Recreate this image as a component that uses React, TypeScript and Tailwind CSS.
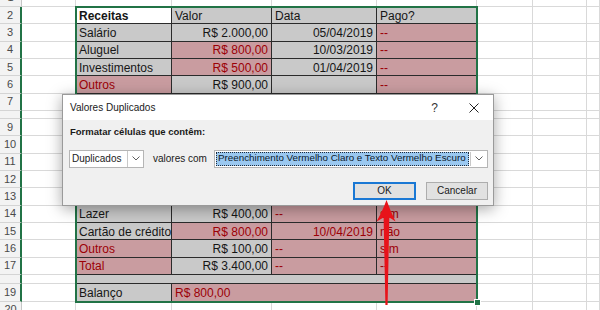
import React from "react";

type Fill = "w" | "g" | "p";
type Cell = { t: string; f: Fill; red?: boolean; right?: boolean; bold?: boolean };

const g = (t = "", right = false): Cell => ({ t, f: "g", right });
const p = (t = "", right = false): Cell => ({ t, f: "p", red: true, right });
const head = (t: string): Cell => ({ t, f: "w", bold: true });

const FILL: Record<Fill, string> = {
  w: "bg-white",
  g: "bg-[#c9c9c9]",
  p: "bg-[#c99ca0]",
};

// B..E widths
const W = ["w-[96px]", "w-[100px]", "w-[105px]", "w-[100px]"];

type Row = { n: number; h: string; kind?: "strip" | "balance"; cells?: Cell[] };

// rows 7-13 sit behind the dialog, so they are left blank
const hidden = (): Cell[] => [g(), g(), g(), p()];

const rows: Row[] = [
  { n: 1, h: "h-[17.35px]" },
  { n: 2, h: "h-[17.35px]", cells: [head("Receitas"), g("Valor"), g("Data"), g("Pago?")] },
  { n: 3, h: "h-[17.35px]", cells: [g("Salário"), g("R$ 2.000,00", true), g("05/04/2019", true), p("--")] },
  { n: 4, h: "h-[17.35px]", cells: [g("Aluguel"), p("R$ 800,00", true), g("10/03/2019", true), p("--")] },
  { n: 5, h: "h-[17.35px]", cells: [g("Investimentos"), p("R$ 500,00", true), g("01/04/2019", true), p("--")] },
  { n: 6, h: "h-[17.35px]", cells: [p("Outros"), g("R$ 900,00", true), g(""), p("--")] },
  { n: 7, h: "h-[17.35px]", cells: hidden() },
  { n: 8, h: "h-[8px]", cells: hidden() },
  { n: 9, h: "h-[17.35px]", cells: hidden() },
  { n: 10, h: "h-[17.35px]", cells: hidden() },
  { n: 11, h: "h-[17.35px]", cells: hidden() },
  { n: 12, h: "h-[17.35px]", cells: hidden() },
  { n: 13, h: "h-[17.35px]", cells: hidden() },
  { n: 14, h: "h-[17.35px]", cells: [g("Lazer"), g("R$ 400,00", true), p("--"), p("sim")] },
  { n: 15, h: "h-[17.35px]", cells: [g("Cartão de crédito"), p("R$ 800,00", true), p("10/04/2019", true), p("não")] },
  { n: 16, h: "h-[17.35px]", cells: [p("Outros"), g("R$ 100,00", true), p("--"), p("sim")] },
  { n: 17, h: "h-[17.35px]", cells: [p("Total"), g("R$ 3.400,00", true), p("--"), p("--")] },
  { n: 18, h: "h-[9px]", kind: "strip" },
  { n: 19, h: "h-[17.35px]", kind: "balance" },
  { n: 20, h: "h-[17.35px]" },
];

const grid = "shrink-0 border-r border-b border-[#d9d9d9] bg-white";
const dark = "shrink-0 border-r border-b border-[#2b2b2b] flex items-center overflow-hidden whitespace-nowrap px-[3px] pt-[1px]";

function DataCell({ c, w }: { c: Cell; w: string }) {
  return (
    <div
      className={`${dark} ${w} ${FILL[c.f]} ${c.right ? "justify-end" : ""} ${
        c.red ? "text-[#9c0006]" : "text-[#161616]"
      } ${c.bold ? "font-bold" : ""}`}
    >
      {c.t}
    </div>
  );
}

function SheetRow({ r }: { r: Row }) {
  const selected = r.n >= 2 && r.n <= 19;
  return (
    <div className={`flex ${r.h}`}>
      <div
        className={`w-[22px] shrink-0 flex items-center justify-center bg-[#f3f3f3] text-[#4a4a4a] text-[11px] border-b border-[#d4d4d4] ${
          selected ? "border-r-2 border-r-[#217346]" : "border-r border-r-[#c6c6c6]"
        }`}
      >
        {r.h === "h-[17.35px]" ? r.n : ""}
      </div>
      <div className={`${grid} w-[54px]`} />
      {r.cells && r.cells.map((c, i) => <DataCell key={i} c={c} w={W[i]} />)}
      {r.kind === "strip" && <div className="shrink-0 w-[401px] bg-[#c9c9c9] border-b border-[#2b2b2b]" />}
      {r.kind === "balance" && (
        <>
          <DataCell c={g("Balanço")} w={W[0]} />
          <DataCell c={p("R$ 800,00")} w="w-[305px]" />
        </>
      )}
      {!r.cells && !r.kind && W.map((w, i) => <div key={i} className={`${grid} ${w}`} />)}
      <div className={`${grid} w-[56px]`} />
      <div className={`${grid} w-[54px]`} />
      <div className={`${grid} flex-1`} />
    </div>
  );
}

function Chevron() {
  return (
    <svg width="8" height="5" viewBox="0 0 8 5">
      <path d="M0.5 0.5 L4 4 L7.5 0.5" stroke="#606060" fill="none" strokeWidth="1" />
    </svg>
  );
}

function Dialog() {
  return (
    <div className="absolute left-[62px] top-[94px] w-[432px] h-[112px] flex flex-col bg-[#f0f0f0] border border-[#9a9a9a] shadow-[0_3px_14px_rgba(0,0,0,0.35)] text-[10px] text-[#1a1a1a]">
      <div className="h-[25px] shrink-0 bg-white flex items-center pl-[7px] pr-[14px]">
        <span>Valores Duplicados</span>
        <span className="ml-auto text-[12px] text-[#333]">?</span>
        <span className="ml-[31px] flex items-center">
          <svg width="10" height="10" viewBox="0 0 10 10">
            <path d="M0.5 0.5 L9.5 9.5 M9.5 0.5 L0.5 9.5" stroke="#222" strokeWidth="1" fill="none" />
          </svg>
        </span>
      </div>
      <div className="pl-[6px] pr-[5px] pt-[6px]">
        <div className="font-bold text-[9.5px] leading-[11px] pl-[1px]">Formatar células que contêm:</div>
        <div className="mt-[12.5px] flex items-center h-[18px]">
          <div className="w-[75px] h-[18px] flex bg-white border border-[#b5b5b5]">
            <span className="flex-1 flex items-center pl-[2px]">Duplicados</span>
            <span className="w-[16px] flex items-center justify-center border-l border-[#c8c8c8]">
              <Chevron />
            </span>
          </div>
          <span className="ml-[9px]">valores com</span>
          <div className="ml-auto w-[274px] h-[18px] flex bg-white border border-[#b5b5b5] p-[1px]">
            <span className="flex-1 min-w-0 flex items-center px-[1px] whitespace-nowrap overflow-hidden text-[9.8px] bg-[#9ac8f0] border border-dotted border-[#1e2a3a] text-[#0c1a2c]">
              Preenchimento Vermelho Claro e Texto Vermelho Escuro
            </span>
            <span className="w-[16px] shrink-0 ml-[1px] flex items-center justify-center border-l border-[#c8c8c8]">
              <Chevron />
            </span>
          </div>
        </div>
        <div className="mt-[14px] flex justify-end gap-[10px]">
          <div className="w-[63px] h-[18px] flex items-center justify-center bg-[#e1e1e1] border-2 border-[#1a78d4]">
            OK
          </div>
          <div className="w-[62px] h-[18px] flex items-center justify-center bg-[#e1e1e1] border border-[#adadad]">
            Cancelar
          </div>
        </div>
      </div>
    </div>
  );
}

export default function App() {
  return (
    <div className="relative w-[600px] h-[310px] overflow-hidden bg-white font-['Liberation_Sans',Arial,sans-serif]">
      <div className="mt-[-10.35px] text-[12px] leading-none">
        {rows.map((r) => (
          <SheetRow key={r.n} r={r} />
        ))}
      </div>

      {/* selection border + fill handle */}
      <div className="absolute left-[75px] top-[6px] w-[403px] h-[297px] border-2 border-[#217346]" />
      <div className="absolute left-[474px] top-[299px] w-[7px] h-[7px] bg-[#217346] border border-white" />

      <Dialog />

      <svg className="absolute left-[370px] top-[195px]" width="35" height="115" viewBox="370 195 35 115">
        <path
          d="M386.5 200 Q390 210 395.5 221.5 Q392 219 389.3 217.5 L387.6 305 L385.4 305 L383.6 217.5 Q381 219 376.5 221.5 Q383 210 386.5 200 Z"
          fill="#e8131a"
        />
      </svg>
    </div>
  );
}
